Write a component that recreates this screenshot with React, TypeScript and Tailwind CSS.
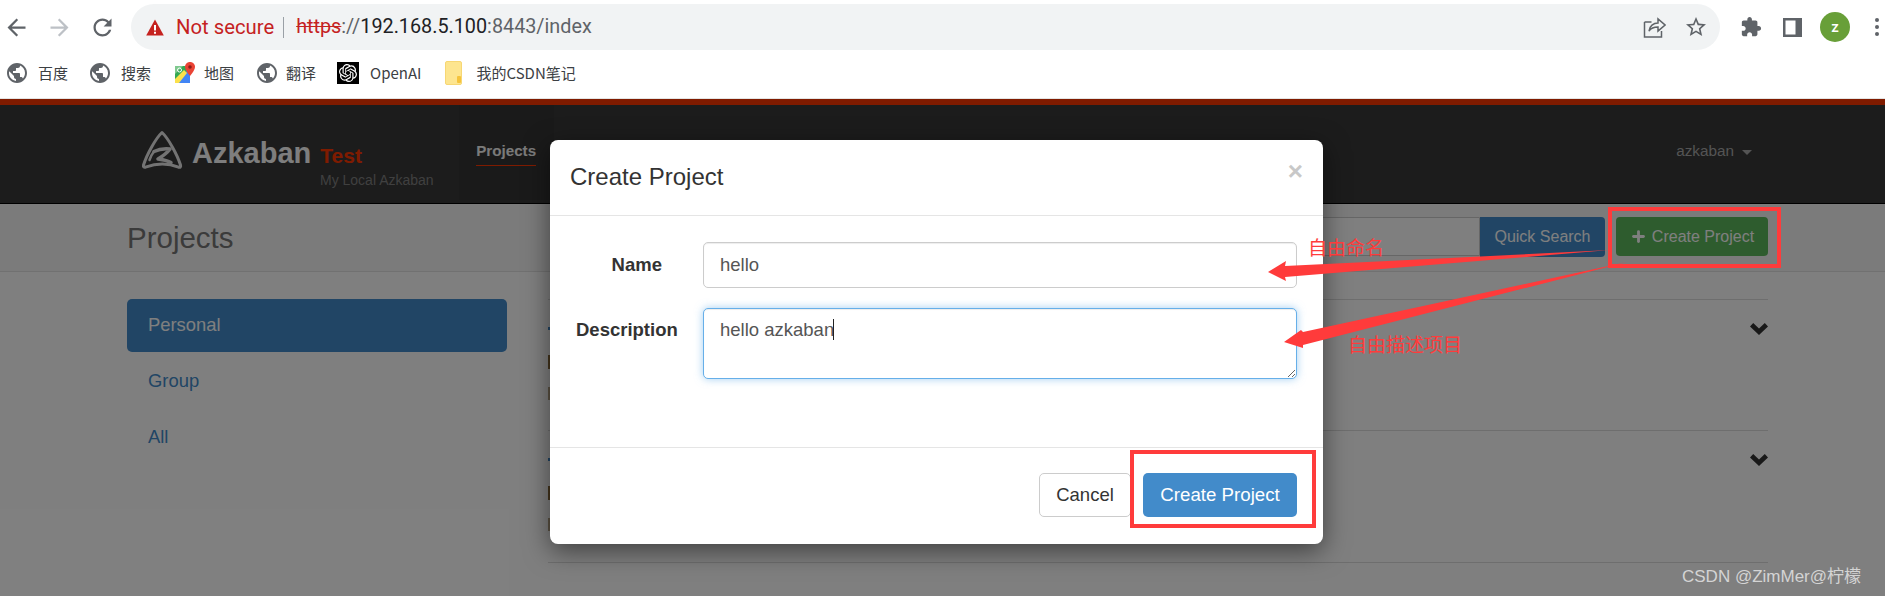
import { SiOpenai } from "react-icons/si";
import { Plus } from "lucide-react";

const SANS = "font-['Liberation_Sans','Noto_Sans_CJK_SC',sans-serif]";

function MaterialIcon({ d, size = 24, className = "" }: { d: string; size?: number; className?: string }) {
  return (
    <svg width={size} height={size} viewBox="0 0 24 24" fill="currentColor" className={className}>
      <path d={d} />
    </svg>
  );
}

const ICONS = {
  back: "M20 11H7.83l5.59-5.59L12 4l-8 8 8 8 1.41-1.41L7.83 13H20v-2z",
  forward: "M12 4l-1.41 1.41L16.17 11H4v2h12.17l-5.58 5.59L12 20l8-8z",
  reload:
    "M17.65 6.35C16.2 4.9 14.21 4 12 4c-4.42 0-7.99 3.58-7.99 8s3.57 8 7.99 8c3.73 0 6.84-2.55 7.73-6h-2.08c-.82 2.33-3.04 4-5.65 4-3.31 0-6-2.69-6-6s2.69-6 6-6c1.66 0 3.14.69 4.22 1.78L13 11h7V4l-2.35 2.35z",
  star: "M22 9.24l-7.19-.62L12 2 9.19 8.63 2 9.24l5.46 4.73L5.82 21 12 17.27 18.18 21l-1.63-7.03L22 9.24zM12 15.4l-3.76 2.27 1-4.28-3.32-2.88 4.38-.38L12 6.1l1.71 4.04 4.38.38-3.32 2.88 1 4.28L12 15.4z",
  puzzle:
    "M20.5 11H19V7c0-1.1-.9-2-2-2h-4V3.5C13 2.12 11.88 1 10.5 1S8 2.12 8 3.5V5H4c-1.1 0-1.99.9-1.99 2v3.8H3.5c1.49 0 2.7 1.21 2.7 2.7s-1.21 2.7-2.7 2.7H2V20c0 1.1.9 2 2 2h3.8v-1.5c0-1.49 1.21-2.7 2.7-2.7 1.49 0 2.7 1.21 2.7 2.7V22H17c1.1 0 2-.9 2-2v-4h1.5c1.38 0 2.5-1.12 2.5-2.5S21.88 11 20.5 11z",
  globe:
    "M12 2C6.48 2 2 6.48 2 12s4.48 10 10 10 10-4.48 10-10S17.52 2 12 2zm-1 17.93c-3.95-.49-7-3.85-7-7.93 0-.62.08-1.21.21-1.79L9 15v1c0 1.1.9 2 2 2v1.93zm6.9-2.54c-.26-.81-1-1.39-1.9-1.39h-1v-3c0-.55-.45-1-1-1H8v-2h2c.55 0 1-.45 1-1V7h2c1.1 0 2-.9 2-2v-.41c2.93 1.19 5 4.06 5 7.41 0 2.08-.8 3.97-2.1 5.39z",
};

function Globe() {
  return <MaterialIcon d={ICONS.globe} className="text-[#5f6368]" />;
}

function MapsIcon() {
  return (
    <svg width="22" height="24" viewBox="0 0 22 24">
      <path d="M1 5h15v17H1z" fill="#34a853" />
      <path d="M1 22 16 7v15z" fill="#4285f4" />
      <path d="M1 18 10 9l3 3-8 10H1z" fill="#fbe14b" />
      <path d="M1 5h8L1 13z" fill="#7fc98f" />
      <circle cx="5.5" cy="9" r="2" fill="none" stroke="#fff" strokeWidth="1" />
      <path d="M16 1c-3 0-5 2.2-5 5 0 3.4 5 9 5 9s5-5.600 5-9c0-2.800-2-5-5-5z" fill="#ea4335" />
      <circle cx="16" cy="6" r="1.800" fill="#8c1d18" />
    </svg>
  );
}

function FolderIcon() {
  return (
    <div className="relative h-[24px] w-[17px] rounded-[2px] border border-[#f7d774] bg-[#fde58f]">
      <div className="absolute bottom-[1px] right-0 h-[7px] w-[4px] rounded-[1px] bg-[#f5c33b]" />
    </div>
  );
}

const BOOKMARKS = [
  { icon: <Globe />, label: "百度", gap: "gap-[9px]", margin: "ml-[5px]" },
  { icon: <Globe />, label: "搜索", gap: "gap-[9px]", margin: "ml-[20px]" },
  { icon: <MapsIcon />, label: "地图", gap: "gap-[8px]", margin: "ml-[23px]" },
  { icon: <Globe />, label: "翻译", gap: "gap-[7px]", margin: "ml-[21px]" },
  {
    icon: (
      <div className="flex size-[22px] items-center justify-center bg-black">
        <SiOpenai className="size-[18px] text-white" />
      </div>
    ),
    label: "OpenAI",
    gap: "gap-[11px]",
    margin: "ml-[21px]",
  },
  { icon: <FolderIcon />, label: "我的CSDN笔记", gap: "gap-[14px]", margin: "ml-[24px]" },
];

function BrowserChrome() {
  return (
    <div className="h-[99px] border-b border-[#e4e4e4] bg-white">
      {/* Toolbar */}
      <div className="flex h-[54px] items-start pt-[4px]">
        <div className="flex h-[46px] items-center pl-[3px] text-[#5f6368]">
          <MaterialIcon d={ICONS.back} size={27} />
          <MaterialIcon d={ICONS.forward} size={27} className="ml-[16px] text-[#bdc1c6]" />
          <MaterialIcon d={ICONS.reload} size={27} className="ml-[16px]" />
        </div>
        <div className="ml-[15px] flex h-[46px] w-[1589px] items-center rounded-full bg-[#f1f3f4] pl-[15px] pr-[12px]">
          <svg width="18" height="17" viewBox="0 0 18 17">
            <path d="M9 0.500 17.800 16.500H0.200z" fill="#c5221f" />
            <path d="M8 6h2v5.500H8zM8 12.800h2v2H8z" fill="#fff" />
          </svg>
          <span className="ml-[12px] font-['Roboto',sans-serif] text-[20.300px] text-[#c5221f]">Not secure</span>
          <div className="ml-[9px] h-[21px] w-px bg-[#9aa0a6]" />
          <div className="ml-[12px] font-['Roboto',sans-serif] text-[19.800px]">
            <span className="text-[#c5221f] line-through">https</span>
            <span className="text-[#5f6368]">://</span>
            <span className="text-[#202124]">192.168.5.100</span>
            <span className="text-[#5f6368]">:8443/index</span>
          </div>
          <div className="ml-auto flex items-center gap-[18px] text-[#5f6368]">
            <svg width="23" height="22" viewBox="0 0 23 22" fill="none" stroke="currentColor" strokeWidth="1.500">
              <path d="M1.500 6v15h17v-6" />
              <path d="M1.500 6h7" />
              <path d="M6 15c.5-5 4.500-8 9-8V3l7 6-7 6v-4c-4 0-7 1-9 4z" />
            </svg>
            <MaterialIcon d={ICONS.star} size={24} />
          </div>
        </div>
        <div className="flex h-[46px] items-center text-[#5f6368]">
          <MaterialIcon d={ICONS.puzzle} size={22} className="ml-[20px]" />
          <svg width="19" height="19" viewBox="0 0 19 19" className="ml-[21px]">
            <rect width="19" height="19" fill="currentColor" />
            <rect x="2.500" y="2.500" width="10" height="14" fill="#fff" />
          </svg>
          <div className="ml-[18px] flex size-[30px] items-center justify-center rounded-full bg-[#689f38] font-['Roboto',sans-serif] text-[15px] font-medium text-white">
            z
          </div>
          <div className="ml-[25px] flex flex-col gap-[3px]">
            <div className="size-[4px] rounded-full bg-[#5f6368]" />
            <div className="size-[4px] rounded-full bg-[#5f6368]" />
            <div className="size-[4px] rounded-full bg-[#5f6368]" />
          </div>
        </div>
      </div>

      {/* Bookmarks */}
      <div className="flex h-[38px] items-center font-['Noto_Sans_CJK_SC',sans-serif] text-[15px] text-[#3c4043]">
        {BOOKMARKS.map((b) => (
          <div key={b.label} className={`flex items-center ${b.gap} ${b.margin}`}>
            {b.icon}
            <span>{b.label}</span>
          </div>
        ))}
      </div>
    </div>
  );
}

function AzkabanLogo() {
  return (
    <svg width="42" height="41" viewBox="0 0 42 41" fill="none" stroke="#e6e6e6" strokeLinecap="round" strokeLinejoin="round">
      <path d="M21 2.500C15 8 6 24 2.500 35c-.5 1.800.5 2.500 2 2.200C16 33 27 33 37.500 37.200c1.800.5 2.500-.5 2-2.200C36 24 27 8 21 2.500z" strokeWidth="3" />
      <path d="M13 21.500c5-2.500 11-3 16-2.500-3 4-7 7-12 10 4 .5 9 1.500 13 3.500" strokeWidth="3.500" />
      <path d="M8.500 30c1-3 2.500-6 4.500-8.500" strokeWidth="2.500" />
    </svg>
  );
}

function Navbar() {
  return (
    <div className={`flex h-[99px] border-b border-black bg-[#383838] pl-[141px] pr-[133px] ${SANS}`}>
      <div className="mt-[25px]">
        <AzkabanLogo />
      </div>
      <div className="ml-[9px] mt-[29px]">
        <div className="flex items-baseline leading-[38px]">
          <span className="text-[29px] font-bold text-[#fcfcfc]">Azkaban</span>
          <span className="ml-[9px] text-[21px] font-bold text-[#ff3601]">Test</span>
        </div>
        <div className="ml-[128px] mt-[-4px] text-[14px] leading-[18px] text-[#808080]">My Local Azkaban</div>
      </div>
      <div className="ml-[25px] flex h-[95px] w-[95px] flex-col items-center bg-[#343434] pt-[36px]">
        <span className="border-b border-[#ff3601] pb-[5px] text-[15.200px] font-bold leading-[19px] text-[#f4f4f4]">Projects</span>
      </div>
      <div className="ml-auto mt-[36px] flex h-[20px] items-center gap-[8px] text-[15.300px] text-[#a8a8a8]">
        azkaban
        <div className="mt-[2px] border-x-[5px] border-t-[5px] border-x-transparent border-t-[#a8a8a8]" />
      </div>
    </div>
  );
}

function Toolbar() {
  return (
    <div className={`flex h-[68px] items-start justify-between border-b border-[#e2e2e2] bg-[#f6f6f6] pl-[127px] pr-[117px] pt-[13px] ${SANS}`}>
      <h1 className="mt-[3px] text-[29.500px] leading-[36px] text-[#777]">Projects</h1>
      <div className="flex">
        <div className="h-[39px] w-[200px] rounded-l-[4px] border border-[#ccc] bg-white" />
        <div className="flex h-[40px] w-[125px] items-center justify-center rounded-r-[4px] bg-[#428bca] text-[16px] text-white">
          Quick Search
        </div>
        <div className="ml-[11px] flex h-[39px] w-[152px] items-center justify-center gap-[5px] rounded-[4px] bg-[#5cb85c] text-[16px] text-white">
          <Plus size={17} strokeWidth={4} />
          Create Project
        </div>
      </div>
    </div>
  );
}

function Sidebar() {
  return (
    <div className={`flex w-[380px] flex-col text-[18.400px] text-[#428bca] ${SANS}`}>
      <div className="flex h-[53px] items-center rounded-[5px] bg-[#428bca] pb-[2px] pl-[21px] text-white">Personal</div>
      <div className="mt-[2px] flex h-[53px] items-center pl-[21px]">Group</div>
      <div className="mt-[3px] flex h-[53px] items-center pl-[21px]">All</div>
    </div>
  );
}

function ChevronDown() {
  return (
    <svg width="18" height="12" viewBox="0 0 18 12" className="ml-auto mt-[23px] text-[#333]" fill="currentColor">
      <path d="M0 3.500 3.200 0 9 5.500 14.800 0 18 3.500 9 12z" />
    </svg>
  );
}

// only the first letters of each project show past the modal's left edge
function RowSlivers() {
  return (
    <div className="flex w-[2px] flex-col">
      <div className="mt-[27px] h-[3px] bg-[#428bca]" />
      <div className="mt-[25px] h-[14px] bg-[#8a6d3b]" />
      <div className="mt-[18px] h-[13px] bg-[#8a6d3b] opacity-60" />
    </div>
  );
}

function ProjectRow({ height }: { height: string }) {
  return (
    <div className={`flex items-start border-t border-[#ddd] ${height}`}>
      <RowSlivers />
      <ChevronDown />
    </div>
  );
}

function ProjectList() {
  return (
    <div className="ml-[41px] flex w-[1220px] flex-col">
      <ProjectRow height="h-[131px]" />
      <ProjectRow height="h-[132px]" />
      <div className="border-t border-[#ddd]" />
    </div>
  );
}

function Modal() {
  return (
    <div className={`absolute left-[550px] top-[41px] w-[773px] rounded-[8px] bg-white shadow-[0_7px_26px_rgba(0,0,0,0.5)] ${SANS} text-[18.500px] text-[#333]`}>
      <div className="flex h-[76px] items-start justify-between border-b border-[#e5e5e5] pl-[20px] pr-[20px]">
        <h4 className="mt-[21px] text-[24px] leading-[32px]">Create Project</h4>
        <span className="mt-[18px] text-[26px] font-bold leading-[26px] text-[#c8c8c8]">×</span>
      </div>
      <div className="h-[231px] pt-[26px]">
        <div className="flex items-start">
          <label className="mt-[11px] w-[112px] text-right font-bold leading-[24px]">Name</label>
          <input
            readOnly
            value="hello"
            className="ml-[41px] h-[46px] w-[594px] rounded-[5px] border border-[#ccc] bg-white px-[16px] text-[#555] shadow-[inset_0_1px_1px_rgba(0,0,0,0.075)] outline-none"
          />
        </div>
        <div className="mt-[20px] flex items-start">
          <label className="ml-[26px] mt-[10px] w-[103px] font-bold leading-[24px]">Description</label>
          <div className="relative ml-[24px]">
            <textarea
              readOnly
              defaultValue="hello azkaban"
              className="block h-[71px] w-[594px] rounded-[5px] border border-[#66afe9] bg-white px-[16px] py-[9px] leading-[24px] text-[#555] shadow-[inset_0_1px_1px_rgba(0,0,0,0.075),0_0_8px_rgba(102,175,233,0.6)] outline-none"
            />
            <div className="absolute left-[130px] top-[11px] h-[21px] w-px bg-[#222]" />
          </div>
        </div>
      </div>
      <div className="flex h-[97px] items-start justify-end gap-[12px] border-t border-[#e5e5e5] pr-[26px] pt-[25px]">
        <div className="flex h-[44px] w-[92px] items-center justify-center rounded-[5px] border border-[#ccc] bg-white">Cancel</div>
        <div className="flex h-[44px] w-[154px] items-center justify-center rounded-[5px] bg-[#428bca] text-[18.700px] text-white">Create Project</div>
      </div>
    </div>
  );
}

function Annotations() {
  return (
    <>
      <svg className="pointer-events-none absolute left-0 top-0" width="1885" height="596" fill="#ff3b3b">
        <polygon points="1610,250 1285,266 1286,261 1268,272 1286,281 1285,277" />
        <polygon points="1627,262 1303,332 1301,330 1284,342 1303,348 1303,345" />
      </svg>
      <div className="absolute left-[1608px] top-[207px] h-[61px] w-[173px] border-4 border-[#ff3b3b]" />
      <div className="absolute left-[1130px] top-[450px] h-[78px] w-[186px] border-4 border-[#ff3b3b]" />
      <span className="absolute left-[1308px] top-[233px] font-['Noto_Sans_CJK_SC',sans-serif] text-[19px] leading-[28px] text-[#ff3b3b]">自由命名</span>
      <span className="absolute left-[1348px] top-[330px] font-['Noto_Sans_CJK_SC',sans-serif] text-[19px] leading-[28px] text-[#ff3b3b]">自由描述项目</span>
      <span className={`absolute left-[1682px] top-[566px] text-[17px] leading-[22px] text-[#d4d4d4] ${SANS}`}>CSDN @ZimMer@柠檬</span>
    </>
  );
}

export default function App() {
  return (
    <div className="relative h-[596px] w-[1885px] overflow-hidden bg-white">
      <BrowserChrome />
      <div className="relative h-[497px] bg-white">
        <div className="h-[6px] bg-[#ff3601]" />
        <Navbar />
        <Toolbar />
        <div className="flex pl-[127px] pt-[27px]">
          <Sidebar />
          <ProjectList />
        </div>
        {/* Backdrop */}
        <div className="absolute inset-0 bg-black/50" />
        <Modal />
      </div>
      <Annotations />
    </div>
  );
}
